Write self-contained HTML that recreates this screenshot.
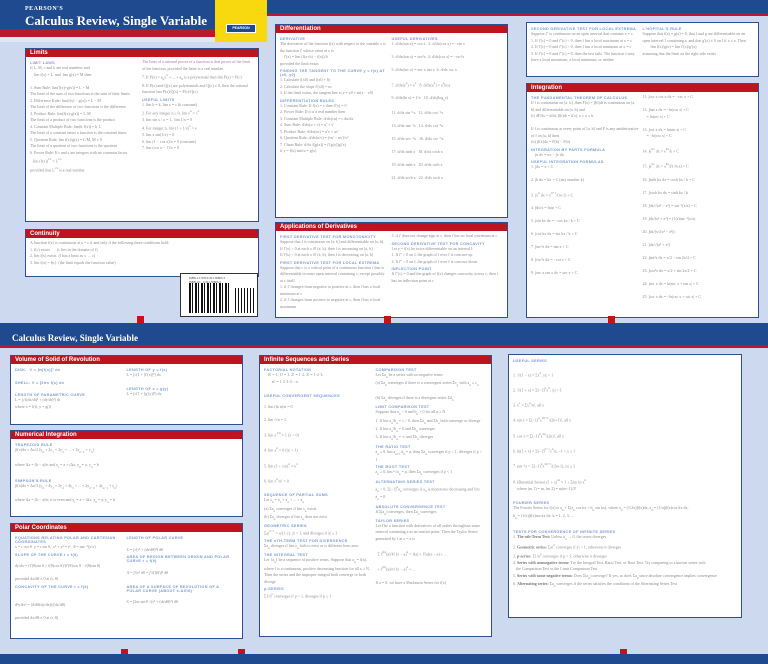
<!DOCTYPE html>
<html><head><meta charset="utf-8"><style>
*{margin:0;padding:0;box-sizing:border-box}
body{width:768px;height:664px;background:#cdd9ef;position:relative;overflow:hidden;font-family:"Liberation Serif",serif;color:#555}
.a{position:absolute}
.p{position:absolute;background:#fff;border:1px solid #2f4f93;overflow:hidden}
.h{background:#bd1520;color:#fff;font:bold 6px "Liberation Sans",sans-serif;height:8px;line-height:8px;padding-left:4px}
.c{padding:2px 4px;font-size:4px;line-height:6.5px;color:#8a8a8a}
.s{color:#7a9ad0;font:bold 3.8px "Liberation Sans",sans-serif;letter-spacing:.3px;margin-top:2px}
.col{float:left;width:50%;padding-right:4px}
.m{position:absolute;width:7px;height:7px;background:#c8101c}
b{color:#777}
</style></head><body>
<div class="a" style="left:0;top:0;width:768px;height:13px;background:#1f4a8f"></div>
<div class="a" style="left:0;top:13px;width:768px;height:3px;background:#b81a2c"></div>
<div class="a" style="left:0;top:0;width:216px;height:29px;background:#1f4a8f"></div>
<div class="a" style="left:0;top:29px;width:216px;height:8px;background:#b81a2c"></div>
<div class="a" style="left:0;top:37px;width:216px;height:5px;background:#dfe6f4"></div>
<div class="a" style="left:215px;top:0;width:52px;height:42px;background:#f8d80e"></div>
<div class="a" style="left:226px;top:24px;width:30px;height:9px;background:#1f4a8f;border:1px solid #fff;color:#fff;font:bold 3.5px 'Liberation Sans',sans-serif;text-align:center;line-height:7px">PEARSON</div>
<div class="a" style="left:25px;top:6px;color:#fff;font:bold 6px 'Liberation Serif',serif;letter-spacing:.5px">PEARSON'S</div>
<div class="a" style="left:25px;top:13px;color:#fff;font:bold 13px 'Liberation Serif',serif;white-space:nowrap">Calculus Review, Single Variable</div>

<div class="p" style="left:25px;top:48px;width:234px;height:174px"><div class="h">Limits</div><div class="c">
<div class="col"><div class="s">LIMIT LAWS</div>If L, M, c and k are real numbers and<br>&nbsp;&nbsp;&nbsp;&nbsp;lim f(x) = L &nbsp;and&nbsp; lim g(x) = M then<br><br>1. Sum Rule: lim(f(x)+g(x)) = L + M<br>The limit of the sum of two functions is the sum of their limits<br>2. Difference Rule: lim(f(x) − g(x)) = L − M<br>The limit of the difference of two functions is the difference<br>3. Product Rule: lim(f(x)·g(x)) = L·M<br>The limit of a product of two functions is the product<br>4. Constant Multiple Rule: lim(k·f(x)) = k·L<br>The limit of a constant times a function is the constant times<br>5. Quotient Rule: lim f(x)/g(x) = L/M, M ≠ 0<br>The limit of a quotient of two functions is the quotient<br>6. Power Rule: If r and s are integers with no common factor<br>&nbsp;&nbsp;&nbsp;lim (f(x))<sup>r/s</sup> = L<sup>r/s</sup><br>provided that L<sup>r/s</sup> is a real number.</div>
<div class="col">The limit of a rational power of a function is that power of the limit of the function, provided the latter is a real number<br>7. If P(x) = a<sub>n</sub>x<sup>n</sup> + ... + a<sub>0</sub> is a polynomial then lim P(x) = P(c)<br>8. If P(x) and Q(x) are polynomials and Q(c) ≠ 0, then the rational function lim P(x)/Q(x) = P(c)/Q(c)<br><div class="s">USEFUL LIMITS</div>1. lim k = k, lim x = c (k constant)<br>2. For any integer n ≥ 0, lim x<sup>n</sup> = c<sup>n</sup><br>3. lim sin x / x = 1, &nbsp;lim 1/x = 0<br>4. For integer n, lim (1 + 1/x)<sup>x</sup> = e<br>5. lim x sin(1/x) = 0<br>6. lim (1 − cos x)/x = 0 (constant)<br>7. lim (cos x − 1)/x = 0</div></div></div>

<div class="p" style="left:25px;top:229px;width:234px;height:48px"><div class="h">Continuity</div><div class="c">A function f(x) is continuous at x = c if and only if the following three conditions hold:<br>1. f(c) exists &nbsp;&nbsp;&nbsp;&nbsp;&nbsp;&nbsp;(c lies in the domain of f)<br>2. lim f(x) exists &nbsp;(f has a limit as x → c)<br>3. lim f(x) = f(c) &nbsp;(the limit equals the function value)</div></div>
<div class="a" style="left:180px;top:273px;width:78px;height:44px;background:#fff;border:1px solid #333">
<div style="position:absolute;left:8px;top:2px;font-size:3px;color:#333">ISBN-13: 978-0-321-50803-3<br>ISBN-10: &nbsp;&nbsp;0-321-50803-5</div>
<div style="position:absolute;left:8px;top:9px;width:40px;height:30px;background:repeating-linear-gradient(90deg,#111 0 2px,#fff 2px 3px,#111 3px 4px,#fff 4px 6px)"></div>
<div style="position:absolute;left:54px;top:14px;width:20px;height:25px;background:repeating-linear-gradient(90deg,#111 0 1px,#fff 1px 3px)"></div></div>

<div class="p" style="left:275px;top:24px;width:233px;height:194px"><div class="h">Differentiation</div><div class="c">
<div class="col"><div class="s">DERIVATIVE</div>The derivative of the function f(x) with respect to the variable x is the function f' whose value at x is<br>&nbsp;&nbsp;&nbsp;&nbsp;f'(x) = lim (f(x+h) − f(x))/h<br>provided the limit exists<br><div class="s">FINDING THE TANGENT TO THE CURVE y = f(x) AT (x0, y0)</div>1. Calculate f(x0) and f(x0 + h)<br>2. Calculate the slope f'(x0) = m<br>3. If the limit exists, the tangent line is y = y0 + m(x − x0)<br><div class="s">DIFFERENTIATION RULES</div>1. Constant Rule: If f(x) = c then f'(x) = 0<br>2. Power Rule: If n is a real number then<br>3. Constant Multiple Rule: d/dx(cu) = c du/dx<br>4. Sum Rule: d/dx(u + v) = u' + v'<br>5. Product Rule: d/dx(uv) = u'v + uv'<br>6. Quotient Rule: d/dx(u/v) = (vu' − uv')/v²<br>7. Chain Rule: d/dx f(g(x)) = f'(g(x))g'(x)<br>if y = f(u) and u = g(x)</div>
<div class="col"><div class="s">USEFUL DERIVATIVES</div>1. d/dx(sin x) = cos x &nbsp;&nbsp;2. d/dx(cos x) = −sin x<br><br>3. d/dx(tan x) = sec²x &nbsp;4. d/dx(cot x) = −csc²x<br><br>5. d/dx(sec x) = sec x tan x &nbsp;6. d/dx csc x<br><br>7. d/dx(e<sup>x</sup>) = e<sup>x</sup> &nbsp;&nbsp;8. d/dx(a<sup>x</sup>) = a<sup>x</sup>ln a<br><br>9. d/dx(ln x) = 1/x &nbsp;&nbsp;10. d/dx(log<sub>a</sub>x)<br><br>11. d/dx sin⁻¹x &nbsp;&nbsp;12. d/dx cos⁻¹x<br><br>13. d/dx tan⁻¹x &nbsp;&nbsp;14. d/dx cot⁻¹x<br><br>15. d/dx sec⁻¹x &nbsp;&nbsp;16. d/dx csc⁻¹x<br><br>17. d/dx sinh x &nbsp;&nbsp;18. d/dx cosh x<br><br>19. d/dx tanh x &nbsp;&nbsp;20. d/dx coth x<br><br>21. d/dx sech x &nbsp;&nbsp;22. d/dx csch x</div></div></div>

<div class="p" style="left:275px;top:222px;width:233px;height:96px"><div class="h">Applications of Derivatives</div><div class="c">
<div class="col"><div class="s">FIRST DERIVATIVE TEST FOR MONOTONICITY</div>Suppose that f is continuous on [a, b] and differentiable on (a, b).<br>If f'(x) &gt; 0 at each x ∈ (a, b), then f is increasing on [a, b]<br>If f'(x) &lt; 0 at each x ∈ (a, b), then f is decreasing on [a, b]<br><div class="s">FIRST DERIVATIVE TEST FOR LOCAL EXTREMA</div>Suppose that c is a critical point of a continuous function f that is differentiable in some open interval containing c, except possibly at c itself.<br>1. if f' changes from negative to positive at c, then f has a local minimum at c<br>2. if f' changes from positive to negative at c, then f has a local maximum</div>
<div class="col">3. if f' does not change sign at c, then f has no local extremum at c<br><div class="s">SECOND DERIVATIVE TEST FOR CONCAVITY</div>Let y = f(x) be twice differentiable on an interval I.<br>1. If f'' &gt; 0 on I, the graph of f over I is concave up<br>2. If f'' &lt; 0 on I, the graph of f over I is concave down<br><div class="s">INFLECTION POINT</div>If f''(c) = 0 and the graph of f(x) changes concavity across c, then f has an inflection point at c</div></div></div>

<div class="p" style="left:526px;top:22px;width:233px;height:55px"><div class="c">
<div class="col"><div class="s">SECOND DERIVATIVE TEST FOR LOCAL EXTREMA</div>Suppose f'' is continuous on an open interval that contains x = c.<br>1. If f'(c) = 0 and f''(c) &lt; 0, then f has a local maximum at x = c<br>2. If f'(c) = 0 and f''(c) &gt; 0, then f has a local minimum at x = c<br>3. If f'(c) = 0 and f''(c) = 0, then the test fails. The function f may have a local maximum, a local minimum, or neither</div>
<div class="col"><div class="s">L'HÔPITAL'S RULE</div>Suppose that f(a) = g(a) = 0, that f and g are differentiable on an open interval I containing a, and that g'(x) ≠ 0 on I if x ≠ a. Then<br>&nbsp;&nbsp;&nbsp;&nbsp;&nbsp;&nbsp;&nbsp;&nbsp;lim f(x)/g(x) = lim f'(x)/g'(x)<br>assuming that the limit on the right side exists</div></div></div>

<div class="p" style="left:526px;top:83px;width:233px;height:235px"><div class="h">Integration</div><div class="c">
<div class="col"><div class="s">THE FUNDAMENTAL THEOREM OF CALCULUS</div>If f is continuous on [a, b], then F(x) = ∫f(t)dt is continuous on [a, b] and differentiable on (a, b) and<br>(i) dF/dx = d/dx ∫f(t)dt = f(x), a ≤ x ≤ b<br><br>If f is continuous at every point of [a, b] and F is any antiderivative of f on [a, b] then<br>(ii) ∫f(x)dx = F(b) − F(a)<br><div class="s">INTEGRATION BY PARTS FORMULA</div>&nbsp;&nbsp;&nbsp;&nbsp;∫u dv = uv − ∫v du<br><div class="s">USEFUL INTEGRATION FORMULAS</div>1. ∫dx = x + C<br><br>2. ∫k dx = kx + C (any number k)<br><br>3. ∫x<sup>n</sup> dx = x<sup>n+1</sup>/(n+1) + C<br><br>4. ∫dx/x = ln|x| + C<br><br>5. ∫sin kx dx = −cos kx / k + C<br><br>6. ∫cos kx dx = sin kx / k + C<br><br>7. ∫sec²x dx = tan x + C<br><br>8. ∫csc²x dx = −cot x + C<br><br>9. ∫sec x tan x dx = sec x + C</div>
<div class="col">11. ∫csc x cot x dx = −csc x + C<br><br>12. ∫tan x dx = −ln|cos x| + C<br>&nbsp;&nbsp;&nbsp;&nbsp;= ln|sec x| + C<br><br>13. ∫cot x dx = ln|sin x| + C<br>&nbsp;&nbsp;&nbsp;&nbsp;= −ln|csc x| + C<br><br>14. ∫e<sup>kx</sup> dx = e<sup>kx</sup>/k + C<br><br>15. ∫a<sup>kx</sup> dx = a<sup>kx</sup>/(k ln a) + C<br><br>16. ∫sinh kx dx = cosh kx / k + C<br><br>17. ∫cosh kx dx = sinh kx / k<br><br>18. ∫dx/√(a² − x²) = sin⁻¹(x/a) + C<br><br>19. ∫dx/(a² + x²) = (1/a)tan⁻¹(x/a)<br><br>20. ∫dx/(x√(x² − a²))<br><br>21. ∫dx/√(a² + x²)<br><br>22. ∫sin²x dx = x/2 − sin 2x/4 + C<br><br>23. ∫cos²x dx = x/2 + sin 2x/4 + C<br><br>24. ∫sec x dx = ln|sec x + tan x| + C<br><br>25. ∫csc x dx = −ln|csc x + cot x| + C</div></div></div>

<div class="m" style="left:137px;top:316px"></div>
<div class="m" style="left:384px;top:316px"></div>
<div class="m" style="left:608px;top:316px"></div>

<div class="a" style="left:0;top:323px;width:768px;height:22px;background:#1f4a8f"></div>
<div class="a" style="left:0;top:345px;width:768px;height:3px;background:#b81a2c"></div>
<div class="a" style="left:12px;top:333px;color:#fff;font:bold 9px 'Liberation Serif',serif;white-space:nowrap">Calculus Review, Single Variable</div>

<div class="p" style="left:10px;top:355px;width:233px;height:70px"><div class="h">Volume of Solid of Revolution</div><div class="c">
<div class="col"><div class="s">DISK: &nbsp;V = ∫π[f(x)]² dx</div><br><div class="s">SHELL: V = ∫2πx f(x) dx</div><br><div class="s">LENGTH OF PARAMETRIC CURVE</div>L = ∫√((dx/dt)² + (dy/dt)²) dt<br>where x = f(t), y = g(t)</div>
<div class="col"><div class="s">LENGTH OF y = f(x)</div>L = ∫√(1 + [f'(x)]²) dx<br><br><div class="s">LENGTH OF x = g(y)</div>L = ∫√(1 + [g'(y)]²) dy</div></div></div>

<div class="p" style="left:10px;top:430px;width:233px;height:87px"><div class="h">Numerical Integration</div><div class="c">
<div class="s">TRAPEZOID RULE</div>∫f(x)dx ≈ Δx/2 (y<sub>0</sub> + 2y<sub>1</sub> + 2y<sub>2</sub> + ... + 2y<sub>n−1</sub> + y<sub>n</sub>)<br><br>where Δx = (b − a)/n and y<sub>i</sub> = a + iΔx, y<sub>0</sub> = a, y<sub>n</sub> = b<br><br><div class="s">SIMPSON'S RULE</div>∫f(x)dx ≈ Δx/3 (y<sub>0</sub> + 4y<sub>1</sub> + 2y<sub>2</sub> + 4y<sub>3</sub> + ... + 2y<sub>n−2</sub> + 4y<sub>n−1</sub> + y<sub>n</sub>)<br><br>where Δx = (b − a)/n, n is even and y<sub>i</sub> = a + iΔx, y<sub>0</sub> = a, y<sub>n</sub> = b</div></div>

<div class="p" style="left:10px;top:523px;width:233px;height:116px"><div class="h">Polar Coordinates</div><div class="c">
<div class="col"><div class="s">EQUATIONS RELATING POLAR AND CARTESIAN COORDINATES</div>x = r cos θ &nbsp;y = r sin θ, &nbsp;x² + y² = r², &nbsp;θ = tan⁻¹(y/x)<br><div class="s">SLOPE OF THE CURVE r = f(θ)</div><br>dy/dx = (f'(θ)sin θ + f(θ)cos θ)/(f'(θ)cos θ − f(θ)sin θ)<br><br>provided dx/dθ ≠ 0 at (r, θ)<br><div class="s">CONCAVITY OF THE CURVE r = f(θ)</div><br><br>d²y/dx² = (d/dθ(dy/dx))/(dx/dθ)<br><br>provided dx/dθ ≠ 0 at (r, θ)</div>
<div class="col"><div class="s">LENGTH OF POLAR CURVE</div><br>L = ∫√(r² + (dr/dθ)²) dθ<br><div class="s">AREA OF REGION BETWEEN ORIGIN AND POLAR CURVE r = f(θ)</div><br>A = ∫½r² dθ = ∫½[f(θ)]² dθ<br><br><div class="s">AREA OF A SURFACE OF REVOLUTION OF A POLAR CURVE (ABOUT x-AXIS)</div><br>S = ∫2πr sin θ √(r² + (dr/dθ)²) dθ</div></div></div>

<div class="p" style="left:259px;top:355px;width:233px;height:282px"><div class="h">Infinite Sequences and Series</div><div class="c">
<div class="col"><div class="s">FACTORIAL NOTATION</div>&nbsp;&nbsp;&nbsp;&nbsp;0! = 1, 1! = 1, 2! = 1·2, 3! = 1·2·3,<br>&nbsp;&nbsp;&nbsp;&nbsp;&nbsp;&nbsp;&nbsp;&nbsp;n! = 1·2·3·4···n<br><br><div class="s">USEFUL CONVERGENT SEQUENCES</div><br>1. lim (ln n)/n = 0<br><br>2. lim ⁿ√n = 1<br><br>3. lim x<sup>1/n</sup> = 1 (x &gt; 0)<br><br>4. lim x<sup>n</sup> = 0 (|x| &lt; 1)<br><br>5. lim (1 + x/n)<sup>n</sup> = e<sup>x</sup><br><br>6. lim x<sup>n</sup>/n! = 0<br><br><div class="s">SEQUENCE OF PARTIAL SUMS</div>Let s<sub>n</sub> = a<sub>1</sub> + a<sub>2</sub> + ... + a<sub>n</sub><br>(a) Σa<sub>n</sub> converges if lim s<sub>n</sub> exists<br>(b) Σa<sub>n</sub> diverges if lim s<sub>n</sub> does not exist<br><div class="s">GEOMETRIC SERIES</div>Σar<sup>n−1</sup> = a/(1−r), |r| &lt; 1, and diverges if |r| ≥ 1<br><div class="s">THE nTH-TERM TEST FOR DIVERGENCE</div>Σa<sub>n</sub> diverges if lim a<sub>n</sub> fails to exist or is different from zero<br><div class="s">THE INTEGRAL TEST</div>Let {a<sub>n</sub>} be a sequence of positive terms. Suppose that a<sub>n</sub> = f(n), where f is a continuous, positive decreasing function for all x ≥ N. Then the series and the improper integral both converge or both diverge<br><div class="s">p-SERIES</div>Σ1/n<sup>p</sup> converges if p &gt; 1, diverges if p ≤ 1</div>
<div class="col"><div class="s">COMPARISON TEST</div>Let Σa<sub>n</sub> be a series with no negative terms<br>(a) Σa<sub>n</sub> converges if there is a convergent series Σc<sub>n</sub> with a<sub>n</sub> ≤ c<sub>n</sub><br><br>(b) Σa<sub>n</sub> diverges if there is a divergent series Σd<sub>n</sub><br><div class="s">LIMIT COMPARISON TEST</div>Suppose that a<sub>n</sub> &gt; 0 and b<sub>n</sub> &gt; 0 for all n ≥ N<br>1. If lim a<sub>n</sub>/b<sub>n</sub> = c &gt; 0, then Σa<sub>n</sub> and Σb<sub>n</sub> both converge or diverge<br>2. If lim a<sub>n</sub>/b<sub>n</sub> = 0 and Σb<sub>n</sub> converges<br>3. If lim a<sub>n</sub>/b<sub>n</sub> = ∞ and Σb<sub>n</sub> diverges<br><div class="s">THE RATIO TEST</div>a<sub>n</sub> ≥ 0, lim a<sub>n+1</sub>/a<sub>n</sub> = ρ, then Σa<sub>n</sub> converges if ρ &lt; 1, diverges if ρ &gt; 1<br><div class="s">THE ROOT TEST</div>a<sub>n</sub> ≥ 0, lim ⁿ√a<sub>n</sub> = ρ, then Σa<sub>n</sub> converges if ρ &lt; 1<br><div class="s">ALTERNATING SERIES TEST</div>a<sub>n</sub> &gt; 0, Σ(−1)<sup>n</sup>a<sub>n</sub> converges if a<sub>n</sub> is monotonic decreasing and lim a<sub>n</sub> = 0<br><div class="s">ABSOLUTE CONVERGENCE TEST</div>If Σ|a<sub>n</sub>| converges, then Σa<sub>n</sub> converges<br><div class="s">TAYLOR SERIES</div>Let f be a function with derivatives of all orders throughout some interval containing a as an interior point. Then the Taylor Series generated by f at x = a is<br><br>&nbsp;&nbsp;Σ f<sup>(k)</sup>(a)/k! (x − a)<sup>k</sup> = f(a) + f'(a)(x − a) + ...<br><br>&nbsp;&nbsp;+ f<sup>(n)</sup>(a)/n! (x − a)<sup>n</sup> + ...<br><br>If a = 0, we have a Maclaurin Series for f(x)</div></div></div>

<div class="p" style="left:508px;top:354px;width:234px;height:264px"><div class="c">
<div class="s">USEFUL SERIES</div><br>1. 1/(1 − x) = Σx<sup>n</sup>, |x| &lt; 1<br><br>2. 1/(1 + x) = Σ(−1)<sup>n</sup>x<sup>n</sup>, |x| &lt; 1<br><br>3. e<sup>x</sup> = Σx<sup>n</sup>/n!, all x<br><br>4. sin x = Σ(−1)<sup>n</sup>x<sup>2n+1</sup>/(2n+1)!, all x<br><br>5. cos x = Σ(−1)<sup>n</sup>x<sup>2n</sup>/(2n)!, all x<br><br>6. ln(1 + x) = Σ(−1)<sup>n−1</sup>x<sup>n</sup>/n, −1 &lt; x ≤ 1<br><br>7. tan⁻¹x = Σ(−1)<sup>n</sup>x<sup>2n+1</sup>/(2n+1), |x| ≤ 1<br><br>8. (Binomial Series) (1 + x)<sup>m</sup> = 1 + Σ(m k) x<sup>k</sup><br>&nbsp;&nbsp;&nbsp;&nbsp;where (m 1) = m, (m 2) = m(m−1)/2!<br><br><div class="s">FOURIER SERIES</div>The Fourier Series for f(x) is a<sub>0</sub> + Σ(a<sub>k</sub> cos kx + b<sub>k</sub> sin kx), where a<sub>0</sub> = (1/2π)∫f(x)dx, a<sub>k</sub> = (1/π)∫f(x)cos kx dx,<br>b<sub>k</sub> = (1/π)∫f(x)sin kx dx, k = 1, 2, 3, ...<br><br><div class="s">TESTS FOR CONVERGENCE OF INFINITE SERIES</div>1. <b>The nth-Term Test:</b> Unless a<sub>n</sub> → 0, the series diverges<br>2. <b>Geometric series:</b> Σar<sup>n</sup> converges if |r| &lt; 1; otherwise it diverges<br>3. <b>p-series:</b> Σ1/n<sup>p</sup> converges if p &gt; 1; otherwise it diverges<br>4. <b>Series with nonnegative terms:</b> Try the Integral Test, Ratio Test, or Root Test. Try comparing to a known series with<br>&nbsp;&nbsp;&nbsp;the Comparison Test or the Limit Comparison Test<br>5. <b>Series with some negative terms:</b> Does Σ|a<sub>n</sub>| converge? If yes, so does Σa<sub>n</sub> since absolute convergence implies convergence<br>6. <b>Alternating series:</b> Σa<sub>n</sub> converges if the series satisfies the conditions of the Alternating Series Test</div></div>

<div class="m" style="left:121px;top:649px"></div>
<div class="m" style="left:238px;top:649px"></div>
<div class="m" style="left:620px;top:649px"></div>
<div class="a" style="left:0;top:654px;width:768px;height:10px;background:#1f4a8f"></div>
</body></html>
